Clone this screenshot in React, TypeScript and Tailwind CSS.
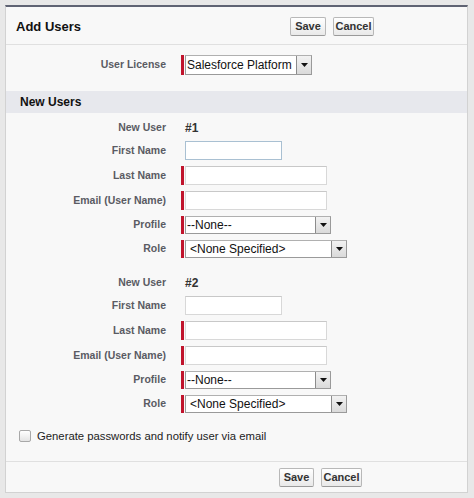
import React from 'react';

const font = "font-['Liberation_Sans',Arial,sans-serif]";

const Btn = ({ label, width }: { label: string; width: string }) => (
  <button
    className={`${width} h-[19px] rounded-[2px] border border-[#b8b8b8] border-b-[#9a9a9a] bg-gradient-to-b from-white to-[#e9e9e9] text-[11px] font-bold text-[#333] leading-none`}
  >
    {label}
  </button>
);

const Required = ({ on }: { on: boolean }) => (
  <div className={`w-[3px] h-full mr-[1px] ${on ? 'bg-[#c0142c]' : ''}`} />
);

const TextInput = ({ width, required = false, focused = false }: { width: string; required?: boolean; focused?: boolean }) => (
  <div className="flex items-stretch h-[19px]">
    <Required on={required} />
    <div
      className={`${width} h-full bg-white border ${
        focused ? 'border-[#a9c0d2]' : 'border-[#d8d8d8] border-t-[#c8c8c8]'
      }`}
    />
  </div>
);

const Arrow = () => (
  <div className="w-[15px] h-full border-l border-[#8c8c8c] bg-gradient-to-b from-[#f2f2f2] to-[#dadada] flex items-center justify-center">
    <svg width="7" height="4" viewBox="0 0 7 4">
      <path d="M0 0 L7 0 L3.5 4 Z" fill="#111" />
    </svg>
  </div>
);

const Select = ({ width, text, height = 'h-[18px]', pad = 'pl-[1px]' }: { width: string; text: string; height?: string; pad?: string }) => (
  <div className={`flex items-stretch ${height}`}>
    <Required on />
    <div className={`${width} h-full bg-white border border-[#9a9a9a] border-t-[#b0b0b0] flex items-stretch`}>
      <div className={`flex-1 flex items-center ${pad} text-[12px] text-[#111] leading-none whitespace-nowrap overflow-hidden`}>
        {text}
      </div>
      <Arrow />
    </div>
  </div>
);

const Row = ({ label, h, children }: { label: string; h: string; children: React.ReactNode }) => (
  <div className={`flex items-center ${h}`}>
    <div className="w-[160px] text-right text-[10.5px] font-bold text-[#5a5b63]">{label}</div>
    <div className="ml-[15px] flex items-center">{children}</div>
  </div>
);

const UserBlock = ({ n, focused }: { n: number; focused: boolean }) => (
  <div>
    <Row label="New User" h="h-[20px]">
      <span className="ml-[4px] text-[12px] font-bold text-[#333]">#{n}</span>
    </Row>
    <Row label="First Name" h="h-[25px]">
      <TextInput width="w-[97px]" focused={focused} />
    </Row>
    <Row label="Last Name" h="h-[25px]">
      <TextInput width="w-[142px]" required />
    </Row>
    <Row label="Email (User Name)" h="h-[25px]">
      <TextInput width="w-[142px]" required />
    </Row>
    <Row label="Profile" h="h-[24px]">
      <Select width="w-[146px]" text="--None--" />
    </Row>
    <Row label="Role" h="h-[23px]">
      <Select width="w-[162px]" text="<None Specified>" pad="pl-[4px]" />
    </Row>
  </div>
);

export default function App() {
  return (
    <div className={`${font} w-[474px] h-[498px] bg-[#e8e8e8] pt-[5px] pl-[5px]`}>
      <div className="w-[463px] bg-[#f8f8f8] border-t-2 border-t-[#5f6373] border-x border-b border-[#d2d2d2]">
        {/* Header */}
        <div className="h-[38px] flex items-center border-b border-[#e0e0e0]">
          <h2 className="w-[284px] pl-[10px] pt-[2px] text-[13px] font-bold text-[#111]">Add Users</h2>
          <div className="flex gap-[7px] pt-[1px]">
            <Btn label="Save" width="w-[36px]" />
            <Btn label="Cancel" width="w-[41px]" />
          </div>
        </div>

        {/* License */}
        <div className="h-[46px] pt-[10px]">
          <Row label="User License" h="h-[20px]">
            <Select width="w-[127px]" text="Salesforce Platform" height="h-[20px]" pad="pl-[1px]" />
          </Row>
        </div>

        {/* New Users band */}
        <div className="h-[22px] bg-[#e7e8ed] flex items-center pl-[14px] text-[12px] font-bold text-[#111]">
          New Users
        </div>

        <div className="pt-[5px]">
          <UserBlock n={1} focused />
          <div className="h-[13px]" />
          <UserBlock n={2} focused={false} />
        </div>

        <div className="mt-[11px] h-[20px] flex items-center pl-[13px]">
          <div className="w-[12px] h-[12px] rounded-[2px] border border-[#a8a8a8] bg-gradient-to-b from-white to-[#e4e4e4]" />
          <span className="ml-[6px] text-[11.3px] text-[#222]">Generate passwords and notify user via email</span>
        </div>

        <div className="h-[16px] border-b border-[#e0e0e0]" />

        <div className="h-[30px] pt-[6px] pl-[273px] flex gap-[7px]">
          <Btn label="Save" width="w-[35px]" />
          <Btn label="Cancel" width="w-[41px]" />
        </div>
      </div>
    </div>
  );
}
